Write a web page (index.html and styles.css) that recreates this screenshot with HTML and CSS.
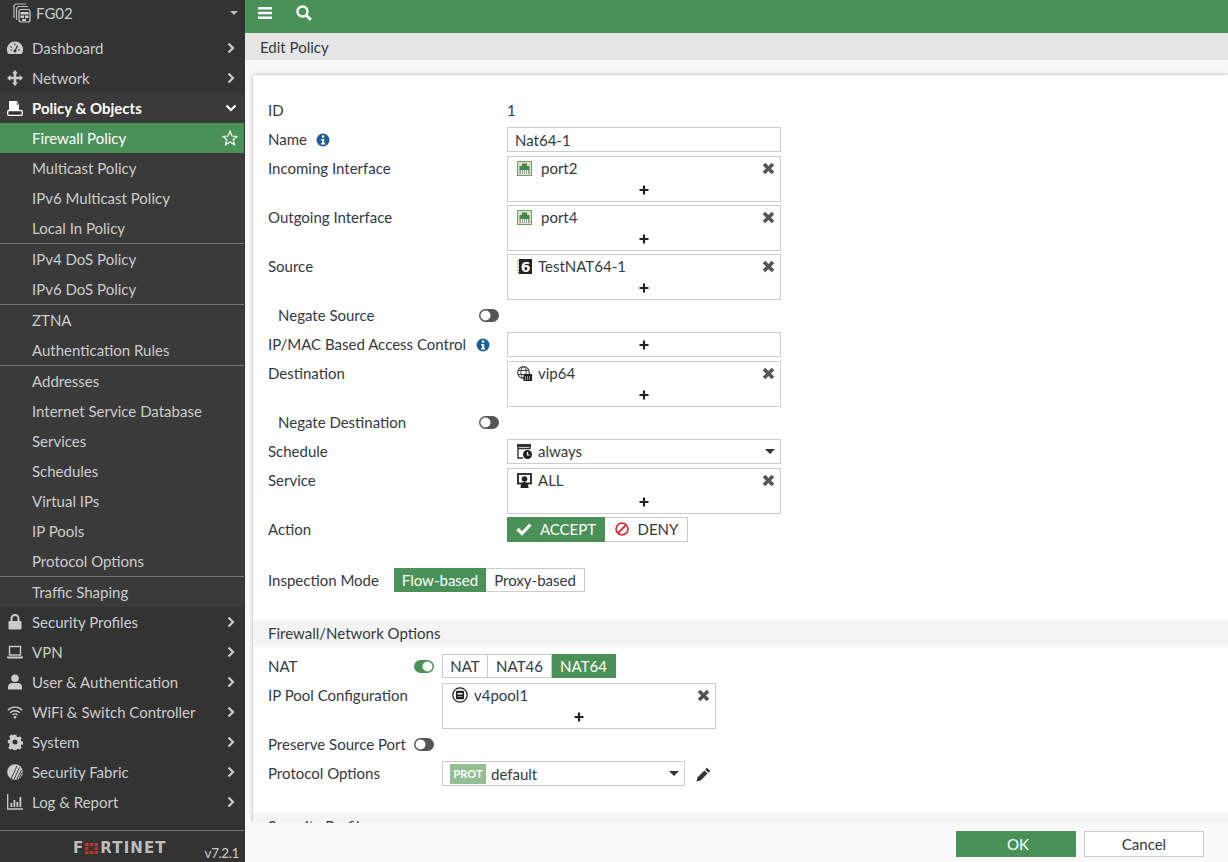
FILE: index.html
```html
<!DOCTYPE html>
<html lang="en">
<head>
  <meta charset="UTF-8" />
  <title>Edit Policy</title>
  <link rel="stylesheet" href="styles.css" />
</head>
<body>

  <!-- shared icons -->
  <svg class="sprite" width="0" height="0">
    <symbol id="i-chev" viewBox="0 0 8 12"><path d="M1.500 1.500 6 6l-4.500 4.500" fill="none" stroke="currentColor" stroke-width="2.200"/></symbol>
    <symbol id="i-x" viewBox="0 0 13 13"><path d="M2 2l9 9M11 2l-9 9" fill="none" stroke="#555" stroke-width="3.600"/></symbol>
    <symbol id="i-plus" viewBox="0 0 10 10"><path d="M5 .5v9M.5 5h9" fill="none" stroke="#222" stroke-width="2.200"/></symbol>
    <symbol id="i-info" viewBox="0 0 14 14"><circle cx="7" cy="7" r="6.500" fill="#1f5f96"/><rect x="5.900" y="2.400" width="2.300" height="2.200" fill="#fff"/><path d="M5 6h3.200v4.200H9.200v1.300H5v-1.300h1V7.300H5z" fill="#fff"/></symbol>
    <symbol id="i-port" viewBox="0 0 15 15"><rect x=".5" y=".5" width="14" height="14" fill="#e6dfc6" stroke="#6f9f6a"/><path d="M2.500 9V5h2.500V2.500h5V5h2.500v4z" fill="#3f8a4f"/><path d="M2.500 9h10v4h-10z" fill="#8f9f96"/><path d="M4.500 9v4M6.500 9v4M8.500 9v4M10.500 9v4" stroke="#f4f4f4"/></symbol>
    <symbol id="i-toggle-off" viewBox="0 0 20 13"><rect width="20" height="13" rx="6.500" fill="#555"/><circle cx="6.500" cy="6.500" r="5" fill="#fff"/></symbol>
    <symbol id="i-toggle-on" viewBox="0 0 20 13"><rect width="20" height="13" rx="6.500" fill="#4a9158"/><circle cx="13.500" cy="6.500" r="5" fill="#fff"/></symbol>
  </svg>

  <div class="app">
    <aside class="sidebar">
      <div class="device">
        <svg class="device-icon" width="22" height="22" viewBox="0 0 22 22"><path d="M4 16V4.500A2.500 2.500 0 0 1 6.500 2H16" fill="none" stroke="#bbb" stroke-width="1.200"/><path d="M6.500 18V7A2.500 2.500 0 0 1 9 4.500h9" fill="none" stroke="#bbb" stroke-width="1.200"/><rect x="9" y="7.500" width="11" height="12.500" rx="2" fill="none" stroke="#ccc" stroke-width="1.200"/><path d="M10.500 10h8v2.500h-8zM10.500 13.500h3.500V16h-3.500zM15 13.500h3.500V16H15zM12 17h4v2h-4z" fill="#ccc"/></svg>
        <span class="device-name">FG02</span>
        <span class="caret caret-light"></span>
      </div>

      <nav class="nav">
        <a class="nav-top"><svg class="nav-icon" viewBox="0 0 16 16"><path d="M8 1.500a8 8 0 0 0-7 12c.2.300.5.500.9.500h12.200c.4 0 .7-.2.900-.5a8 8 0 0 0-7-12z" fill="currentColor"/><path d="M8 11 10.500 5.500M3.500 10h1.800M3.500 6.500l1.200 1M11 10h1.800M7.800 3.500v1.800" stroke="#333" stroke-width="1.200"/><circle cx="8" cy="11" r="1.500" fill="#333"/></svg><span>Dashboard</span><svg class="chev"><use href="#i-chev"/></svg></a>
        <a class="nav-top"><svg class="nav-icon" viewBox="0 0 16 16"><path d="M8 0l3 3.400H9.300v3.300h3.300V5l3.400 3-3.400 3V9.300H9.300v3.300H11L8 16l-3-3.400h1.700V9.300H3.400V11L0 8l3.400-3v1.700h3.300V3.400H5z" fill="currentColor"/></svg><span>Network</span><svg class="chev"><use href="#i-chev"/></svg></a>
        <a class="nav-top is-open"><svg class="nav-icon" viewBox="0 0 16 16"><path d="M2 1h7.500L12 5v5H2z" fill="#fff"/><path d="M9.500 1v4H12z" fill="#333" stroke="#fff" stroke-width=".6"/><rect x=".7" y="10.500" width="14.600" height="4.800" rx="1.200" fill="#333" stroke="#fff" stroke-width="1.300"/></svg><span>Policy &amp; Objects</span><svg class="chev chev-down" viewBox="0 0 12 8"><path d="M1.500 1.500 6 6l4.500-4.500" fill="none" stroke="currentColor" stroke-width="2.200"/></svg></a>

        <div class="nav-sub">
          <a class="nav-item is-active"><span>Firewall Policy</span><svg class="star" viewBox="0 0 16 16"><path d="M8 1.300 10 6l5 .4-3.800 3.300 1.200 5L8 12l-4.400 2.700 1.200-5L1 6.400 6 6z" fill="none" stroke="#fff" stroke-width="1.200"/></svg></a>
          <a class="nav-item"><span>Multicast Policy</span></a>
          <a class="nav-item"><span>IPv6 Multicast Policy</span></a>
          <a class="nav-item"><span>Local In Policy</span></a>
          <div class="nav-rule"></div>
          <a class="nav-item"><span>IPv4 DoS Policy</span></a>
          <a class="nav-item"><span>IPv6 DoS Policy</span></a>
          <div class="nav-rule"></div>
          <a class="nav-item"><span>ZTNA</span></a>
          <a class="nav-item"><span>Authentication Rules</span></a>
          <div class="nav-rule"></div>
          <a class="nav-item"><span>Addresses</span></a>
          <a class="nav-item"><span>Internet Service Database</span></a>
          <a class="nav-item"><span>Services</span></a>
          <a class="nav-item"><span>Schedules</span></a>
          <a class="nav-item"><span>Virtual IPs</span></a>
          <a class="nav-item"><span>IP Pools</span></a>
          <a class="nav-item"><span>Protocol Options</span></a>
          <div class="nav-rule"></div>
          <a class="nav-item"><span>Traffic Shaping</span></a>
        </div>

        <a class="nav-top"><svg class="nav-icon" viewBox="0 0 16 16"><path d="M4.500 7V4.500a3.500 3.500 0 0 1 7 0V7" fill="none" stroke="currentColor" stroke-width="2"/><rect x="1.500" y="7" width="13" height="8.500" rx="1.200" fill="currentColor"/></svg><span>Security Profiles</span><svg class="chev"><use href="#i-chev"/></svg></a>
        <a class="nav-top"><svg class="nav-icon" viewBox="0 0 16 16"><rect x="2.500" y="2.500" width="11" height="8.500" fill="none" stroke="currentColor" stroke-width="1.400"/><path d="M0 12.500h16v1.200l-1 .8H1l-1-.8z" fill="currentColor"/></svg><span>VPN</span><svg class="chev"><use href="#i-chev"/></svg></a>
        <a class="nav-top"><svg class="nav-icon" viewBox="0 0 16 16"><circle cx="8" cy="4.300" r="3.800" fill="currentColor"/><path d="M1 15.500v-2.700C1 10.500 3 9 5 9h6c2 0 4 1.500 4 3.800v2.700z" fill="currentColor"/></svg><span>User &amp; Authentication</span><svg class="chev"><use href="#i-chev"/></svg></a>
        <a class="nav-top"><svg class="nav-icon" viewBox="0 0 16 16"><path d="M.8 6.200a10 10 0 0 1 14.400 0M3.200 8.800a6.600 6.600 0 0 1 9.600 0M5.600 11a3.300 3.300 0 0 1 4.800 0" fill="none" stroke="currentColor" stroke-width="1.300"/><circle cx="8" cy="13.300" r="1.300" fill="currentColor"/></svg><span>WiFi &amp; Switch Controller</span><svg class="chev"><use href="#i-chev"/></svg></a>
        <a class="nav-top"><svg class="nav-icon" viewBox="0 0 16 16"><path d="M6.500 1h3l.4 2 1.400.6 1.700-1.100 2.100 2.100-1.100 1.700.6 1.400 2 .4v3l-2 .4-.6 1.400 1.100 1.700-2.100 2.100-1.700-1.100-1.400.6-.4 2h-3l-.4-2-1.400-.6-1.700 1.100-2.100-2.100 1.100-1.700L2.400 10l-2-.4v-3l2-.4.600-1.400L1.900 2.700 4 .6 5.700 1.700 6.100 1z" transform="translate(.4 -.1) scale(.95)" fill="currentColor"/><circle cx="8" cy="8" r="2.500" fill="#333"/></svg><span>System</span><svg class="chev"><use href="#i-chev"/></svg></a>
        <a class="nav-top"><svg class="nav-icon" viewBox="0 0 16 16"><circle cx="8" cy="8" r="7.800" fill="currentColor"/><path d="M4 15 10 2M7 15.500 12.500 3.500M10 15l4.500-9M12.500 13.500l2.800-5.500" stroke="#333" stroke-width=".9"/></svg><span>Security Fabric</span><svg class="chev"><use href="#i-chev"/></svg></a>
        <a class="nav-top"><svg class="nav-icon" viewBox="0 0 16 16"><path d="M.7 0v15h15.300" fill="none" stroke="currentColor" stroke-width="1.300"/><path d="M3.500 9h1.800v4H3.500zM6.500 6h1.800v7H6.500zM9.500 8h1.800v5H9.500zM12.500 3h1.800v10h-1.800z" fill="currentColor"/></svg><span>Log &amp; Report</span><svg class="chev"><use href="#i-chev"/></svg></a>
      </nav>

      <div class="brand">
        <div class="logo"><span>F</span><svg class="logo-o" viewBox="0 0 13 11"><path d="M0 0h3.500v3H0zM4.700 0h3.600v3H4.700zM9.500 0H13v3H9.500zM0 4h3.500v3H0zM9.500 4H13v3H9.500zM0 8h3.500v3H0zM4.700 8h3.600v3H4.700zM9.500 8H13v3H9.500z" fill="#c8321f"/></svg><span>RTINET</span></div>
        <span class="version">v7.2.1</span>
      </div>
    </aside>

    <div class="main">
      <header class="topbar">
        <svg class="top-icon" width="14" height="12" viewBox="0 0 14 12"><path d="M0 0h14v2.400H0zM0 4.800h14v2.400H0zM0 9.600h14V12H0z" fill="#fff"/></svg>
        <svg class="top-icon" width="16" height="16" viewBox="0 0 16 16"><circle cx="6.500" cy="6.500" r="5" fill="none" stroke="#fff" stroke-width="2.400"/><path d="M10 10l4.800 4.800" stroke="#fff" stroke-width="3"/></svg>
      </header>
      <div class="page-title">Edit Policy</div>

      <div class="content">
        <div class="card">
          <div class="form">
            <div class="row row-id"><label class="label">ID</label><div class="value">1</div></div>

            <div class="row row-single">
              <label class="label">Name <svg class="info info-name"><use href="#i-info"/></svg></label>
              <div class="field input-box">Nat64-1</div>
            </div>

            <div class="row">
              <label class="label">Incoming Interface</label>
              <div class="field multi">
                <div class="chip"><svg class="chip-icon chip-gap"><use href="#i-port"/></svg>port2<svg class="remove"><use href="#i-x"/></svg></div>
                <div class="add"><svg class="plus"><use href="#i-plus"/></svg></div>
              </div>
            </div>

            <div class="row">
              <label class="label">Outgoing Interface</label>
              <div class="field multi">
                <div class="chip"><svg class="chip-icon chip-gap"><use href="#i-port"/></svg>port4<svg class="remove"><use href="#i-x"/></svg></div>
                <div class="add"><svg class="plus"><use href="#i-plus"/></svg></div>
              </div>
            </div>

            <div class="row">
              <label class="label">Source</label>
              <div class="field multi">
                <div class="chip">
                  <svg class="chip-icon" viewBox="0 0 15 15"><path d="M0 2h2M0 5h2M0 8h2M0 11h2M0 14h2" stroke="#c08a2a" stroke-width="1.200"/><rect x="2" y="0" width="13" height="15" fill="#222"/><text x="8.500" y="13" class="six">6</text></svg>
                  TestNAT64-1<svg class="remove"><use href="#i-x"/></svg>
                </div>
                <div class="add"><svg class="plus"><use href="#i-plus"/></svg></div>
              </div>
            </div>

            <div class="row row-toggle">
              <label class="label label-indent">Negate Source</label>
              <svg class="toggle"><use href="#i-toggle-off"/></svg>
            </div>

            <div class="row row-single">
              <label class="label">IP/MAC Based Access Control<svg class="info info-ip"><use href="#i-info"/></svg></label>
              <div class="field single-add"><svg class="plus"><use href="#i-plus"/></svg></div>
            </div>

            <div class="row">
              <label class="label">Destination</label>
              <div class="field multi">
                <div class="chip">
                  <svg class="chip-icon" viewBox="0 0 15 15"><circle cx="6.500" cy="6.500" r="5.800" fill="none" stroke="#444" stroke-width="1.200"/><ellipse cx="6.500" cy="6.500" rx="2.600" ry="5.800" fill="none" stroke="#444"/><path d="M1 4.500h11M1 8.500h11" stroke="#444"/><rect x="6.500" y="8" width="8.500" height="7" fill="#222"/><path d="M8 11h5.500M8 13h5.500" stroke="#fff" stroke-dasharray="1 1"/></svg>
                  vip64<svg class="remove"><use href="#i-x"/></svg>
                </div>
                <div class="add"><svg class="plus"><use href="#i-plus"/></svg></div>
              </div>
            </div>

            <div class="row row-toggle">
              <label class="label label-indent">Negate Destination</label>
              <svg class="toggle"><use href="#i-toggle-off"/></svg>
            </div>

            <div class="row row-single">
              <label class="label">Schedule</label>
              <div class="field select-box">
                <svg class="chip-icon" viewBox="0 0 15 15"><path d="M1 3v11h5M1 1h12v3.500H1z" fill="none" stroke="#333" stroke-width="1.400"/><rect x="0" y="0" width="14" height="3" fill="#333"/><circle cx="10.500" cy="10.500" r="4.500" fill="#222"/><path d="M10.500 8v3h2" fill="none" stroke="#fff" stroke-width="1.200"/></svg>
                <span>always</span>
                <span class="caret"></span>
              </div>
            </div>

            <div class="row">
              <label class="label">Service</label>
              <div class="field multi">
                <div class="chip">
                  <svg class="chip-icon" viewBox="0 0 15 15"><rect x="1" y="1" width="13" height="9.500" fill="none" stroke="#222" stroke-width="1.800"/><circle cx="7.500" cy="6" r="2.800" fill="#222"/><path d="M3.500 15c0-4 1.500-6 4-6s4 2 4 6z" fill="#222"/></svg>
                  ALL<svg class="remove"><use href="#i-x"/></svg>
                </div>
                <div class="add"><svg class="plus"><use href="#i-plus"/></svg></div>
              </div>
            </div>

            <div class="row">
              <label class="label">Action</label>
              <div class="btn-group btn-group-action">
                <div class="seg seg-accept is-on"><svg class="seg-icon" viewBox="0 0 16 13"><path d="M1.500 6.500l4.500 4.500L14.500 2" fill="none" stroke="#fff" stroke-width="3.200"/></svg>ACCEPT</div>
                <div class="seg seg-deny"><svg class="seg-icon" viewBox="0 0 14 14"><circle cx="7" cy="7" r="5.900" fill="none" stroke="#d0343a" stroke-width="1.800"/><path d="M3 11 11 3" stroke="#d0343a" stroke-width="1.800"/></svg>DENY</div>
              </div>
            </div>

            <div class="row row-mode">
              <label class="label label-mode">Inspection Mode</label>
              <div class="btn-group">
                <div class="seg seg-flow is-on">Flow-based</div>
                <div class="seg seg-proxy">Proxy-based</div>
              </div>
            </div>
          </div>

          <div class="section-bar">Firewall/Network Options</div>

          <div class="form form-nat">
            <div class="row row-nat">
              <label class="label label-short">NAT<svg class="toggle"><use href="#i-toggle-on"/></svg></label>
              <div class="btn-group">
                <div class="seg seg-nat">NAT</div>
                <div class="seg seg-nat46">NAT46</div>
                <div class="seg seg-nat64 is-on">NAT64</div>
              </div>
            </div>

            <div class="row">
              <label class="label label-short">IP Pool Configuration</label>
              <div class="field multi">
                <div class="chip">
                  <svg class="chip-icon chip-pool" viewBox="0 0 16 16"><circle cx="8" cy="8" r="7.200" fill="none" stroke="#222" stroke-width="1.300"/><rect x="4" y="3.800" width="8" height="8.400" rx="1" fill="#222"/><path d="M5.500 6h5v1.500h-5z" fill="#fff"/><path d="M5.500 9.500h5" stroke="#999"/></svg>
                  v4pool1<svg class="remove"><use href="#i-x"/></svg>
                </div>
                <div class="add"><svg class="plus"><use href="#i-plus"/></svg></div>
              </div>
            </div>

            <div class="row row-toggle">
              <label class="label label-short">Preserve Source Port<svg class="toggle"><use href="#i-toggle-off"/></svg></label>
            </div>

            <div class="row row-single">
              <label class="label label-short">Protocol Options</label>
              <div class="field select-box select-prot">
                <span class="prot">PROT</span>
                <span>default</span>
                <span class="caret"></span>
              </div>
              <svg class="pencil" width="15" height="15" viewBox="0 0 15 15"><path d="M11 .8l3.200 3.200-1.800 1.800-3.200-3.200zM8.400 3.400l3.200 3.200-7 7L.5 14.500l.9-4.100z" fill="#333"/></svg>
            </div>
          </div>

          <div class="section-bar section-security">Security Profiles</div>
        </div>
      </div>

      <footer class="footer">
        <button class="btn btn-ok">OK</button>
        <button class="btn btn-cancel">Cancel</button>
      </footer>
    </div>
  </div>

</body>
</html>
```

FILE: styles.css
```css
/* base */
html, body {
  margin: 0;
  height: 100%;
  overflow: hidden;
}

body {
  font-family: "Lato", "Liberation Sans", sans-serif;
  font-size: 15px;
  color: #34393f;
  background-color: #f9f9f9;
}

.sprite {
  position: absolute;
}

.app {
  display: flex;
  height: 862px;
}

/* sidebar */
.sidebar {
  width: 245px;
  flex-shrink: 0;
  display: flex;
  flex-direction: column;
  background-color: #333;
  color: #ccc;
}

.device {
  height: 33px;
  display: flex;
  align-items: center;
  padding: 0 7px 7px 10px;
  box-sizing: border-box;
  font-size: 15px;
}

.device-icon {
  margin-right: 4px;
}

.device-name {
  flex: 1;
}

.caret {
  width: 0;
  height: 0;
  border-left: 5px solid transparent;
  border-right: 5px solid transparent;
  border-top: 5px solid #333;
}

.caret-light {
  border-top-color: #bbb;
  border-left-width: 4px;
  border-right-width: 4px;
  border-top-width: 4px;
}

.nav {
  flex: 1;
  width: 244px;
}

.nav a {
  display: flex;
  align-items: center;
  height: 30px;
}

.nav-top {
  padding: 0 9px 0 7px;
}

.nav-top span,
.nav-item span {
  flex: 1;
}

.nav-icon {
  width: 16px;
  height: 16px;
  margin-right: 9px;
  flex-shrink: 0;
  color: #ccc;
}

.chev {
  width: 8px;
  height: 12px;
  color: #ccc;
}

.chev-down {
  width: 12px;
  height: 8px;
  color: #fff;
  margin-right: -2px;
}

.is-open {
  background-color: #3a3a3a;
  color: #fff;
  font-weight: 700;
}

.is-open .nav-icon {
  color: #fff;
}

.nav-sub {
  background-color: #3a3a3a;
}

.nav-item {
  padding: 0 6px 0 32px;
}

.nav-item.is-active {
  background-color: #4a9158;
  color: #fff;
}

.star {
  width: 16px;
  height: 16px;
}

.nav-rule {
  height: 1px;
  background-color: #777;
}

.brand {
  position: relative;
  height: 31px;
  width: 244px;
  border-top: 1px solid #777;
}

.logo {
  display: flex;
  align-items: center;
  gap: 1px;
  padding: 11px 0 0 73px;
  font-family: "DejaVu Sans", sans-serif;
  font-weight: 700;
  font-size: 15px;
  letter-spacing: 1.100px;
  line-height: 12px;
  color: #bdbdbd;
}

.logo-o {
  width: 13px;
  height: 11px;
  margin-right: 1px;
}

.version {
  position: absolute;
  right: 5px;
  bottom: 1px;
  font-size: 13.500px;
  letter-spacing: -0.4px;
}

/* main column */
.main {
  flex: 1;
  min-width: 0;
  display: flex;
  flex-direction: column;
}

.topbar {
  height: 33px;
  flex-shrink: 0;
  display: flex;
  align-items: center;
  gap: 24px;
  padding: 0 0 7px 13px;
  box-sizing: border-box;
  background-color: #4a9158;
}

.page-title {
  height: 27px;
  flex-shrink: 0;
  line-height: 28px;
  padding-left: 15px;
  background-color: #e5e5e5;
}

.content {
  flex: 1;
  min-height: 0;
  overflow: hidden;
  padding: 15px 0 0 8px;
}

.card {
  height: 100%;
  background-color: #fff;
  box-shadow: 0 0 4px rgba(0, 0, 0, 0.3);
}

/* form */
.form {
  padding: 22px 0 0 15px;
}

.form-nat {
  padding-top: 7px;
}

.row {
  display: flex;
  margin-bottom: 3px;
}

.row-id {
  height: 26px;
  line-height: 26px;
  margin-bottom: 4px;
}

.row-id .label {
  height: 27px;
}

.row-single {
  margin-bottom: 4px;
}

.row-toggle {
  height: 26px;
}

.label {
  width: 239px;
  flex-shrink: 0;
  line-height: 25px;
  height: 25px;
  display: flex;
  align-items: center;
  white-space: nowrap;
}

.label-indent {
  width: 201px;
  padding-left: 10px;
}

.label-short {
  width: 174px;
}

.row-toggle .label-short {
  width: 166px;
  justify-content: space-between;
}

.row-toggle > .toggle {
  margin-top: 6px;
}

.label-short > .toggle {
  margin-right: 8px;
}

.row-toggle .label-short > .toggle {
  margin-right: 0;
}

.row-nat .label {
  justify-content: space-between;
}

.label-mode {
  width: 126px;
}

.toggle {
  width: 20px;
  height: 13px;
  flex-shrink: 0;
}

.info {
  width: 14px;
  height: 14px;
}

.info-name {
  margin-left: 9px;
}

.info-ip {
  margin-left: 10px;
}

.field {
  width: 274px;
  box-sizing: border-box;
  border: 1px solid #ccc;
  background-color: #fff;
}

.input-box {
  height: 25px;
  line-height: 24px;
  padding-left: 7px;
}

.multi {
  height: 46px;
}

.chip {
  display: flex;
  align-items: center;
  height: 22px;
  padding: 0 5px 0 9px;
}

.chip-icon {
  width: 15px;
  height: 15px;
  margin-right: 6px;
  flex-shrink: 0;
}

.chip-gap {
  margin-right: 9px;
}

.chip-pool {
  width: 16px;
  height: 16px;
  margin-left: 0;
}

.six {
  font-family: "DejaVu Sans", sans-serif;
  font-weight: 700;
  font-size: 14px;
  fill: #fff;
  text-anchor: middle;
}

.remove {
  width: 13px;
  height: 13px;
  margin-left: auto;
}

.add,
.single-add {
  display: flex;
  align-items: center;
  justify-content: center;
}

.add {
  height: 22px;
}

.single-add {
  height: 25px;
}

.plus {
  width: 10px;
  height: 10px;
}

.select-box {
  height: 25px;
  display: flex;
  align-items: center;
  padding: 0 5px 1px 9px;
}

.select-box > span:nth-last-child(2) {
  flex: 1;
}

.select-prot {
  width: 243px;
  padding-left: 7px;
  padding-bottom: 0;
}

.prot {
  flex-shrink: 0;
  width: 36px;
  height: 20px;
  line-height: 20px;
  margin-right: 5px;
  text-align: center;
  font-size: 11px;
  font-weight: 700;
  color: #fff;
  background-color: #92bf94;
}

.pencil {
  margin: 6px 0 0 11px;
}

/* segmented buttons */
.btn-group {
  display: flex;
}

.seg {
  height: 24px;
  box-sizing: border-box;
  display: flex;
  align-items: center;
  justify-content: center;
  border: 1px solid #ccc;
  border-left-width: 0;
  background-color: #fff;
}

.seg:first-child {
  border-left-width: 1px;
}

.seg.is-on {
  border-color: #4a9158;
  background-color: #4a9158;
  color: #fff;
}

.seg-icon {
  width: 16px;
  height: 14px;
  margin-right: 8px;
}

.btn-group-action .seg {
  height: 25px;
  padding-bottom: 1px;
}

.seg-accept {
  width: 98px;
}

.seg-deny {
  width: 83px;
}

.seg-flow {
  width: 92px;
}

.seg-proxy {
  width: 99px;
}

.seg-nat {
  width: 46px;
}

.seg-nat46,
.seg-nat64 {
  width: 64px;
}

.row-mode {
  margin: 26px 0 0;
  line-height: 24px;
}

.row-mode .label {
  height: 24px;
}

.row-nat {
  margin-bottom: 5px;
}

.row-nat .label {
  height: 24px;
}

/* section headers */
.section-bar {
  height: 27px;
  line-height: 27px;
  padding-left: 15px;
  margin-top: 28px;
  background-color: #f4f4f4;
}

.section-security {
  margin-top: 27px;
}

/* footer */
.footer {
  height: 39px;
  flex-shrink: 0;
  position: relative;
  display: flex;
  justify-content: flex-end;
  align-items: center;
  gap: 8px;
  padding-right: 24px;
  box-sizing: border-box;
  background-color: #f9f9f9;
}

.btn {
  width: 120px;
  height: 26px;
  margin-top: 3px;
  padding: 0;
  box-sizing: border-box;
  font-family: inherit;
  font-size: 15px;
  color: #34393f;
  border: 1px solid #ccc;
  background-color: #fff;
}

.btn-ok {
  padding-left: 4px;
  color: #fff;
  border-color: #4a9158;
  background-color: #4a9158;
}
```
